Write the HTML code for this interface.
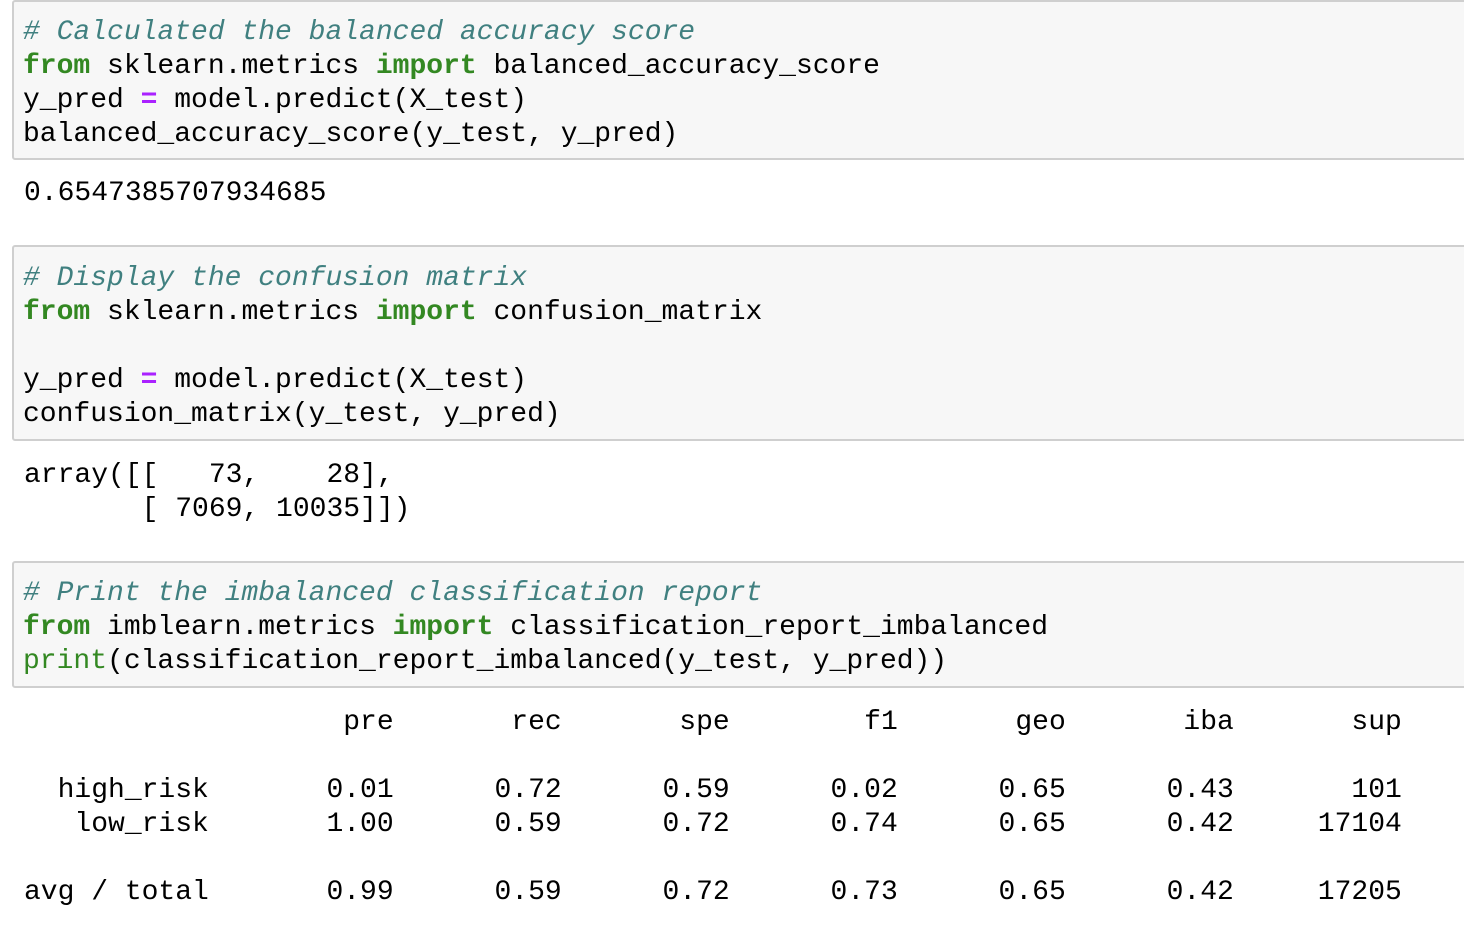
<!DOCTYPE html>
<html><head><meta charset="utf-8"><style>
body{margin:0;width:1464px;height:936px;background:#fff;overflow:hidden;position:relative;font-family:"Liberation Mono",monospace;font-size:28px;color:#000}
.cell{position:absolute;left:12px;width:1470px;background:#f7f7f7;border:2px solid #cfcfcf;border-radius:3px;box-sizing:border-box}
.l{position:absolute;left:23px;height:34px;line-height:34px;white-space:pre}
.c{color:#408080;font-style:italic}
.k{color:#338822;font-weight:bold}
.o{color:#aa22ff;font-weight:bold}
.b{color:#338822}
</style></head><body>
<div class="cell" style="top:0;height:160px"></div>
<div class="cell" style="top:245px;height:196px"></div>
<div class="cell" style="top:561px;height:127px"></div>

<div class="l" style="top:16px"><span class="c"># Calculated the balanced accuracy score</span></div>
<div class="l" style="top:50px"><span class="k">from</span> sklearn.metrics <span class="k">import</span> balanced_accuracy_score</div>
<div class="l" style="top:84px">y_pred <span class="o">=</span> model.predict(X_test)</div>
<div class="l" style="top:118px">balanced_accuracy_score(y_test, y_pred)</div>

<div class="l" style="top:177px;left:24px">0.6547385707934685</div>

<div class="l" style="top:262px"><span class="c"># Display the confusion matrix</span></div>
<div class="l" style="top:296px"><span class="k">from</span> sklearn.metrics <span class="k">import</span> confusion_matrix</div>
<div class="l" style="top:364px">y_pred <span class="o">=</span> model.predict(X_test)</div>
<div class="l" style="top:398px">confusion_matrix(y_test, y_pred)</div>

<div class="l" style="top:459px;left:24px">array([[   73,    28],
       [ 7069, 10035]])</div>

<div class="l" style="top:577px"><span class="c"># Print the imbalanced classification report</span></div>
<div class="l" style="top:611px"><span class="k">from</span> imblearn.metrics <span class="k">import</span> classification_report_imbalanced</div>
<div class="l" style="top:645px"><span class="b">print</span>(classification_report_imbalanced(y_test, y_pred))</div>

<div class="l" style="top:706px;left:24px">                   pre       rec       spe        f1       geo       iba       sup

  high_risk       0.01      0.72      0.59      0.02      0.65      0.43       101
   low_risk       1.00      0.59      0.72      0.74      0.65      0.42     17104

avg / total       0.99      0.59      0.72      0.73      0.65      0.42     17205</div>
</body></html>
